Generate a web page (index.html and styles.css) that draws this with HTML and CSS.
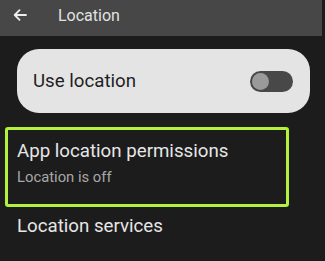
FILE: index.html
```html
<!DOCTYPE html>
<html>
<head>
<meta charset="utf-8">
<link rel="stylesheet" href="styles.css">
</head>
<body>
<div class="page">
  <header class="topbar">
    <svg class="back" width="14" height="12" viewBox="0 0 14 12">
      <path d="M13 6H2M6.5 1.2L1.7 6l4.8 4.8" fill="none" stroke="#eeeeee" stroke-width="1.8" stroke-linecap="round" stroke-linejoin="round"/>
    </svg>
    <span class="title">Location</span>
  </header>
  <div class="card">
    <span class="card-label">Use location</span>
    <span class="toggle"><span class="thumb"></span></span>
  </div>
  <div class="highlight">
    <div class="item-title">App location permissions</div>
    <div class="item-sub">Location is off</div>
  </div>
  <div class="item">
    <div class="item-title">Location services</div>
  </div>
</div>
</body>
</html>
```
FILE: styles.css
```css
html, body {
  margin: 0;
  padding: 0;
  background: #1c1c1c;
}
body {
  font-family: Roboto, "Noto Sans", sans-serif;
  width: 325px;
  height: 261px;
  overflow: hidden;
}
.page {
  width: 322px;
}
.topbar {
  height: 36px;
  background: #474747;
  display: flex;
  align-items: center;
  padding-left: 13px;
  box-sizing: border-box;
}
.back {
  display: block;
  margin-top: -6px;
}
.title {
  margin-left: 31px;
  margin-top: -6px;
  color: #e2e2e2;
  font-size: 16px;
}
.card {
  margin: 13px 0 0 17px;
  width: 293px;
  height: 64px;
  border-radius: 22px;
  background: #e4e4e4;
  display: flex;
  align-items: center;
  justify-content: space-between;
  box-sizing: border-box;
  padding: 0 17px 0 16px;
}
.card-label {
  color: #1f1f1f;
  font-size: 18.7px;
}
.toggle {
  width: 43px;
  height: 21px;
  border-radius: 11px;
  background: #484848;
  display: flex;
  align-items: center;
  padding-left: 2px;
  box-sizing: border-box;
}
.thumb {
  width: 17px;
  height: 17px;
  border-radius: 50%;
  background: #9a9a9a;
}
.highlight {
  margin: 14px 0 0 5px;
  width: 284px;
  height: 80px;
  border: 3px solid #b2f13d;
  border-radius: 3px;
  box-sizing: border-box;
  padding: 10px 0 0 9px;
}
.item-title {
  color: #e6e6e6;
  font-size: 18.7px;
  line-height: 22px;
}
.item-sub {
  color: #a8a8a8;
  font-size: 14.8px;
  line-height: 20px;
  margin-top: 5px;
}
.item {
  padding: 8px 0 0 17px;
}
```
